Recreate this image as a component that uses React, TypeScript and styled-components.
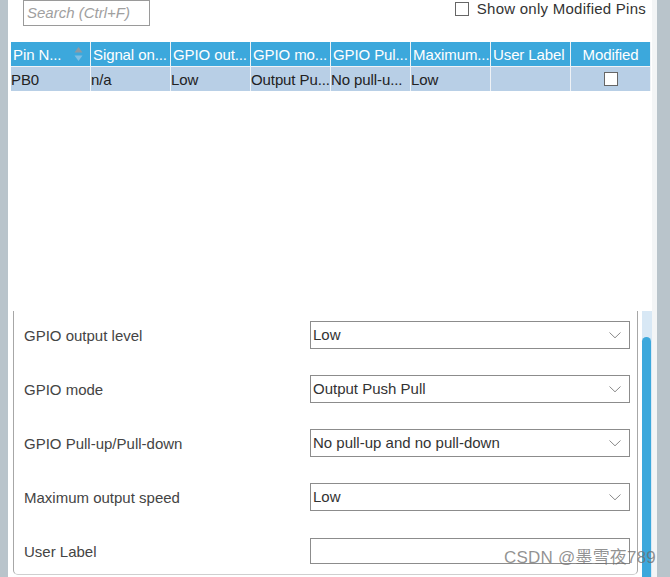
import React from "react";
import styled, { createGlobalStyle } from "styled-components";

const GlobalStyle = createGlobalStyle`
  html, body {
    margin: 0;
    padding: 0;
    background: #ffffff;
  }
  body {
    font-family: "Liberation Sans", Arial, sans-serif;
    font-size: 15px;
    color: #333;
  }
`;

const StPage = styled.div`
  position: relative;
  display: flex;
  width: 670px;
  height: 577px;
  overflow: hidden;
  background: #ffffff;
`;

const StSideStrip = styled.div<{ $width: number }>`
  flex: 0 0 ${(p) => p.$width}px;
  background: #b9c4cb;
`;

const StMain = styled.div`
  flex: 1;
  display: flex;
  flex-direction: column;
  padding: 0 5px 0 3px;
  background: linear-gradient(to left, #f3f5f6 5px, #ffffff 5px);
`;

const StToolbar = styled.div`
  height: 42px;
  display: flex;
  align-items: flex-start;
  justify-content: space-between;
`;

const StSearch = styled.div`
  margin-left: 12px;
  width: 127px;
  height: 26px;
  box-sizing: border-box;
  border: 1px solid #9a9a9a;
  padding: 0 0 0 3px;
  line-height: 24px;
  font-style: italic;
  color: #a0a0a0;
  background: #fff;
`;

const StFilter = styled.label`
  display: flex;
  align-items: center;
  gap: 8px;
  margin-top: 1px;
  padding-right: 6px;
  color: #333;
  line-height: 16px;
  letter-spacing: 0.25px;
`;

const StCheck = styled.span<{ $size?: number }>`
  display: inline-block;
  width: ${(p) => p.$size ?? 14}px;
  height: ${(p) => p.$size ?? 14}px;
  box-sizing: border-box;
  border: 1px solid #666;
  background: #fff;
`;

const StTable = styled.div`
  display: grid;
  grid-template-columns: repeat(8, 79px);
  column-gap: 1px;
  row-gap: 1px;
  width: 640px;
  background: #eef2f6;
`;

const StHeadCell = styled.div<{ $center?: boolean }>`
  position: relative;
  box-sizing: border-box;
  height: 24px;
  line-height: 26px;
  background: #3ca8dc;
  color: #ffffff;
  white-space: nowrap;
  overflow: visible;
  letter-spacing: -0.1px;
  text-align: ${(p) => (p.$center ? "center" : "left")};
  padding-left: ${(p) => (p.$center ? 0 : 2)}px;
`;

const StCell = styled.div<{ $center?: boolean }>`
  height: 24px;
  display: flex;
  align-items: center;
  justify-content: ${(p) => (p.$center ? "center" : "flex-start")};
  background: #b8cfe6;
  color: #222;
  white-space: nowrap;
  overflow: visible;
  letter-spacing: -0.1px;
`;

const StSortIcon = styled.svg`
  position: absolute;
  right: 7px;
  top: 4px;
`;

const StSpacer = styled.div`
  flex: 1;
`;

const StPropertyArea = styled.div`
  display: flex;
  height: 266px;
  margin-left: 2px;
  gap: 4px;
`;

const StPanel = styled.div`
  flex: 1;
  box-sizing: border-box;
  border: 1px solid #a7a7a7;
  border-top: none;
  border-bottom-color: #cfcfcf;
  border-radius: 0 0 5px 5px;
  margin-bottom: 2px;
  padding: 10px 7px 0 10px;
  display: flex;
  flex-direction: column;
  gap: 26px;
`;

const StPropRow = styled.div`
  display: grid;
  grid-template-columns: 286px 320px;
  align-items: center;
  height: 28px;
`;

const StPropLabel = styled.div`
  color: #444;
  white-space: nowrap;
`;

const StSelect = styled.div<{ $height?: number }>`
  position: relative;
  box-sizing: border-box;
  height: ${(p) => p.$height ?? 28}px;
  border: 1px solid #8c8c8c;
  padding-left: 2px;
  line-height: ${(p) => (p.$height ?? 28) - 2}px;
  color: #333;
  background: #fff;
`;

const StChevron = styled.svg`
  position: absolute;
  right: 8px;
  top: 50%;
  margin-top: -3px;
`;

const StScrollTrack = styled.div`
  position: relative;
  width: 10px;
  background: #d8e8f5;
`;

const StScrollThumb = styled.div`
  position: absolute;
  left: 0;
  right: 1px;
  top: 26px;
  bottom: 0;
  border-radius: 5px 5px 0 0;
  background: #3ca8dc;
`;

const StWatermark = styled.div`
  position: absolute;
  right: 14px;
  bottom: 9px;
  font-family: "Liberation Sans", "Noto Sans CJK SC", sans-serif;
  font-size: 17px;
  color: rgba(110, 110, 110, 0.75);
  letter-spacing: 0.2px;
`;

const columns = [
  "Pin N...",
  "Signal on...",
  "GPIO out...",
  "GPIO mo...",
  "GPIO Pul...",
  "Maximum...",
  "User Label",
];

const pinRow = ["PB0", "n/a", "Low", "Output Pu...", "No pull-u...", "Low", ""];

const properties = [
  { label: "GPIO output level", value: "Low" },
  { label: "GPIO mode", value: "Output Push Pull" },
  { label: "GPIO Pull-up/Pull-down", value: "No pull-up and no pull-down" },
  { label: "Maximum output speed", value: "Low" },
];

function Chevron() {
  return (
    <StChevron width="12" height="7" viewBox="0 0 12 7">
      <path d="M0.5 0.5 L6 5.8 L11.5 0.5" fill="none" stroke="#8a8a8a" strokeWidth="1" />
    </StChevron>
  );
}

function SortIcon() {
  return (
    <StSortIcon width="9" height="16" viewBox="0 0 9 16">
      <path d="M4.5 1 L8.5 6.5 H0.5 Z" fill="#8d9aa3" />
      <path d="M4.5 15 L8.5 9.5 H0.5 Z" fill="#7fbfe3" />
    </StSortIcon>
  );
}

export default function App() {
  return (
    <>
      <GlobalStyle />
      <StPage>
        <StSideStrip $width={8} />
        <StMain>
          <StToolbar>
            <StSearch>Search (Ctrl+F)</StSearch>
            <StFilter>
              <StCheck />
              Show only Modified Pins
            </StFilter>
          </StToolbar>

          <StTable>
            {columns.map((col, i) => (
              <StHeadCell key={col}>
                {col}
                {i === 0 && <SortIcon />}
              </StHeadCell>
            ))}
            <StHeadCell $center>Modified</StHeadCell>
            {pinRow.map((value, i) => (
              <StCell key={i}>{value}</StCell>
            ))}
            <StCell $center>
              <StCheck />
            </StCell>
          </StTable>

          <StSpacer />

          <StPropertyArea>
            <StPanel>
              {properties.map((prop) => (
                <StPropRow key={prop.label}>
                  <StPropLabel>{prop.label}</StPropLabel>
                  <StSelect>
                    {prop.value}
                    <Chevron />
                  </StSelect>
                </StPropRow>
              ))}
              <StPropRow>
                <StPropLabel>User Label</StPropLabel>
                <StSelect $height={26} />
              </StPropRow>
            </StPanel>
            <StScrollTrack>
              <StScrollThumb />
            </StScrollTrack>
          </StPropertyArea>
        </StMain>
        <StSideStrip $width={13} />
        <StWatermark>CSDN @墨雪夜789</StWatermark>
      </StPage>
    </>
  );
}
